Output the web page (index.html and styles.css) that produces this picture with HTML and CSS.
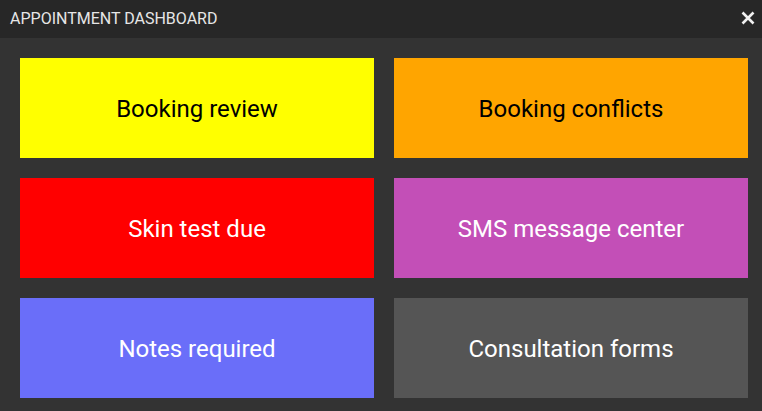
FILE: index.html
```html
<!DOCTYPE html>
<html>
<head>
<meta charset="utf-8">
<link rel="stylesheet" href="styles.css">
</head>
<body>
<div class="window">
  <div class="titlebar">
    <span class="title">APPOINTMENT DASHBOARD</span>
    <svg class="close" width="14" height="14" viewBox="0 0 14 14"><path d="M1.5 1.5 L12.5 12.5 M12.5 1.5 L1.5 12.5" stroke="#f0f0f0" stroke-width="2.6" stroke-linecap="butt"/></svg>
  </div>
  <div class="grid">
    <div class="tile yellow">Booking review</div>
    <div class="tile orange">Booking conflicts</div>
    <div class="tile red">Skin test due</div>
    <div class="tile purple">SMS message center</div>
    <div class="tile blue">Notes required</div>
    <div class="tile gray">Consultation forms</div>
  </div>
</div>
</body>
</html>
```
FILE: styles.css
```css
html, body { margin: 0; padding: 0; }
body { background: #333333; font-family: Roboto, "Liberation Sans", sans-serif; overflow: hidden; }
.window { width: 762px; height: 411px; background: #333333; }
.titlebar { height: 38px; background: #272727; display: flex; align-items: center; justify-content: space-between; padding: 0 7px 0 10px; box-sizing: border-box; }
.title { color: #e6e6e6; font-size: 16px; margin-top: -1px; }
.close { display: block; margin-top: -3px; }
.grid { display: grid; grid-template-columns: 354px 354px; grid-auto-rows: 100px; gap: 20px; padding: 20px; }
.tile { display: flex; align-items: center; justify-content: center; font-size: 24px; color: #ffffff; padding-top: 2px; box-sizing: border-box; }
.yellow { background: #ffff00; color: #000; }
.orange { background: #ffa500; color: #000; }
.red { background: #ff0000; }
.purple { background: #c34fb7; }
.blue { background: #6a6ef9; }
.gray { background: #555555; }
```
